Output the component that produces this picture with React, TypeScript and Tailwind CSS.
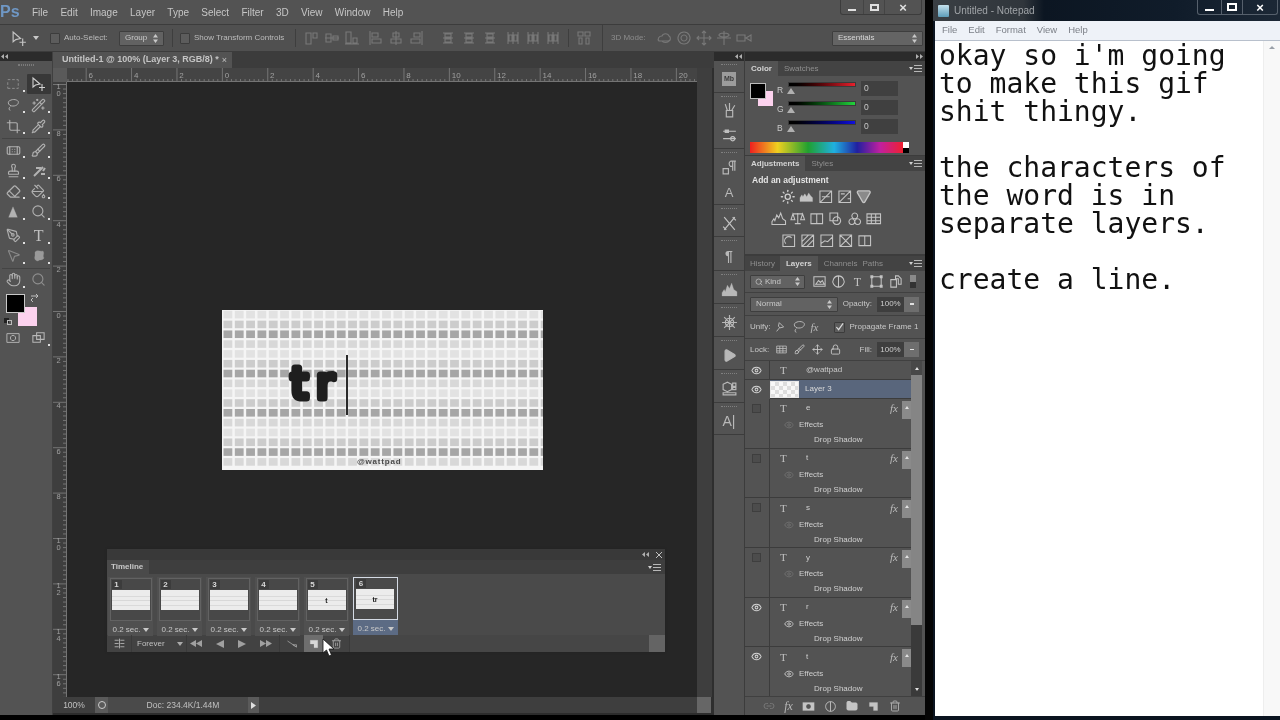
import { Wand2, Crop, Pipette, Bandage, Brush, Stamp, Eraser, PaintBucket, Search, PenTool, MousePointer2, Hand, Eye, Trash2, Link2, Folder, Lock, Move, Sun, Play, Triangle } from 'lucide-react';

const menus = ['File', 'Edit', 'Image', 'Layer', 'Type', 'Select', 'Filter', '3D', 'View', 'Window', 'Help'];

// little 16x16 drawings of the Photoshop glyphs lucide has no match for
const paths: Record<string, string> = {
  marquee: 'M2 3h3M7 3h3M12 3h2v2M14 7v3M14 12v1h-2M10 13H7M5 13H2v-2M2 9V6',
  move: 'M2 2v9l2.500-2L9 8zM11 8v7M8 11.500h6',
  lasso: 'M3 4c3-3 9-3 11 0 1 3-3 6-8 5-3-1-4-3-3-5M5 10c-2 1-2 4 0 4',
  history: 'M3 13l9-9M5 5h5M10 11h4M12 8l2-3',
  gradient: 'M8 2l5 12H3z',
  shape: 'M4 4c3-3 5 0 8-1 2 3-1 4 1 7-2 3-4 1-6 3-3 0-4-3-3-5z',
  alignTop: 'M2 3h5v11H2zM9 3h4v5H9z',
  alignMid: 'M2 4h5v8H2zM9 6h5v4H9zM1 8h14',
  alignBot: 'M2 2h5v11H2zM9 8h4v5H9zM1 14h14',
  alignLeft: 'M2 1v14M4 3h6v4H4zM4 9h9v4H4z',
  alignCenter: 'M8 1v14M5 3h6v4H5zM3 9h10v4H3z',
  alignRight: 'M14 1v14M6 3h6v4H6zM3 9h9v4H3z',
  distH: 'M3 3h10M3 8h10M3 13h10M5 4h6v3H5zM5 9h6v3H5z',
  distV: 'M3 2v12M8 2v12M13 2v12M4 5h3v6H4zM9 5h3v6H9z',
  gap: 'M2 2h5v4H2zM9 2h5v4H9zM3 8h3v6H3zM10 8h3v6h-3z',
  orbit: 'M3 11c-2-2 0-5 3-5 1-3 6-3 7 0 2 1 2 5-1 5zM6 11c1 2 6 2 7 0',
  roll: 'M8 2a6 6 0 1 0 .01 0zM8 5a3 3 0 1 0 .01 0z',
  pan: 'M8 1v14M1 8h14M6 3l2-2 2 2M6 13l2 2 2-2M3 6L1 8l2 2M13 6l2 2-2 2',
  slide: 'M8 3a5 2 0 1 0 .01 0zM8 1v14M1 8h14',
  cam: 'M1 5h8v6H1zM10 8l5-3v6z',
  screen: 'M6 3h8v7H6zM2 6h8v7H2z',
  tools: 'M3 2l10 12M13 2L3 14M2 11l3 3M11 2l3 3',
  brushes: 'M5 8h6v6H5zM6 8L4 2M8 8V1M10 8l3-5',
  sliders: 'M2 4h12M2 11h12M11 9a2 2 0 1 0 .01 0zM4 3h3v2H4z',
  paraStyle: 'M9 2h5M11 2v9M13 2v9M9 2a3 3 0 0 0 0 5h2M2 9h5v5H2z',
  hist: 'M1 14V11l2-3 1 2 2-6 2 3 2-5 2 6 3 2v4z',
  wheel: 'M8 1v14M1 8h14M3 3l10 10M13 3L3 13M8 4a4 4 0 1 0 .01 0z',
  cube: 'M2 4l4-2 4 2v5l-4 2-4-2zM11 3h3v3h-3zM11 7h3v2h-3zM2 12h12v2H2z',
  timelineMenu: 'M2 4h5M2 8h5M2 12h5M9 4h5M9 8h5M9 12h5M8 2v12',
  tween: 'M2 4l12 8M9 9l5 3v-3z',
  newLayer: 'M3 3h10v10H8V8H3z',
  mask: 'M1 3h14v10H1zM8 5a3 3 0 1 0 .01 0z',
  adjustCircle: 'M8 2a6 6 0 1 0 .01 0zM8 2v12',
  pinCo: 'M3 13l4-5M6 3l5 5-4 1-2-2z',
  image: 'M2 3h12v10H2zM4 11l3-4 2 2 2-2 2 4z',
  crop2: 'M3 3h10v10H3zM2 2h2v2H2zM12 2h2v2h-2zM2 12h2v2H2zM12 12h2v2h-2z',
  smart: 'M3 6h6v8H3zM8 2h3l3 3v6h-3V5H8z',
  curves: 'M2 2h12v12H2zM2 14L14 2M4 8h8',
  levels: 'M1 13V9l2-3 1 2 2-3 2 3 2-4 2 3 2 2v4z',
  expo: 'M2 2h12v12H2zM2 14L14 2M4 5h4M11 10h3',
  scale: 'M8 2v11M3 3h10M3 3L1 9h4zM13 3l-2 6h4zM5 13h6',
  bw: 'M2 3h12v10H2zM8 3v10',
  photo: 'M2 2h8v8H2zM9 6a4 4 0 1 0 .01 0z',
  mixer: 'M8 2a3 3 0 1 0 .01 0zM5 8a3 3 0 1 0 .01 0zM11 8a3 3 0 1 0 .01 0z',
  grid: 'M1 3h14v10H1zM1 6.500h14M1 10h14M5.500 3v10M10 3v10',
  invert: 'M2 2h12v12H2zM5 11a4 4 0 0 1 6-6',
  poster: 'M2 2h12v12H2zM2 14L14 2M2 9l7-7M7 14l7-7',
  thresh: 'M2 2h12v12H2zM2 11l4-3 3 1 5-5',
  select: 'M2 2h12v12H2zM2 2l6 6 6-6M2 14l6-6 6 6',
};

const P = ({ n, s = 16, c = '#b2b2b2', f = false, w = 1.1 }: { n: string; s?: number; c?: string; f?: boolean; w?: number }) => (
  <svg width={s} height={s} viewBox="0 0 16 16" className="shrink-0">
    <path d={paths[n]} fill={f ? c : 'none'} stroke={c} strokeWidth={f ? 0.3 : w} />
  </svg>
);

const Arrows = () => (
  <svg width="5" height="9" viewBox="0 0 5 9" className="shrink-0">
    <path d="M2.500 0L5 3.500H0zM2.500 9L0 5.500h5z" fill="#c8c8c8" />
  </svg>
);

const Down = ({ c = '#c8c8c8' }: { c?: string }) => (
  <svg width="6" height="4" viewBox="0 0 6 4" className="shrink-0">
    <path d="M0 0h6L3 4z" fill={c} />
  </svg>
);

const PanelMenu = () => (
  <svg width="13" height="7" viewBox="0 0 13 7" className="shrink-0">
    <path d="M0 2h4L2 5z" fill="#d0d0d0" />
    <path d="M5 .5h8M5 3.500h8M5 6.500h8" stroke="#b8b8b8" />
  </svg>
);

const Collapse = ({ flip = false }: { flip?: boolean }) => (
  <svg width="7" height="5" viewBox="0 0 7 5" className="shrink-0">
    <path d={flip ? 'M0 0l3 2.500L0 5zM4 0l3 2.500L4 5z' : 'M3 0L0 2.500 3 5zM7 0L4 2.500 7 5z'} fill="#b0b0b0" />
  </svg>
);

const Tool = ({ children, active = false, more = true }: { children: React.ReactNode; active?: boolean; more?: boolean }) => (
  <div className={`relative flex h-[20px] w-[25px] items-center justify-center rounded-[1px] ${active ? 'bg-[#383838]' : ''}`}>
    {children}
    {more && <span className="absolute bottom-[2px] right-[1px] h-[2px] w-[2px] bg-[#e0e0e0]" />}
  </div>
);

const ic = { size: 15, color: '#b0b0b0', strokeWidth: 1.8 };

const toolRows: React.ReactNode[][] = [
  [<P n="marquee" s={14} c="#8e8e8e" />, <P n="move" c="#d0d0d0" />],
  [<P n="lasso" s={14} />, <Wand2 {...ic} />],
  [<Crop {...ic} />, <Pipette {...ic} />],
];
const toolRows2: React.ReactNode[][] = [
  [<Bandage {...ic} />, <Brush {...ic} />],
  [<Stamp {...ic} />, <P n="history" w={2} />],
  [<Eraser {...ic} />, <PaintBucket {...ic} />],
  [<P n="gradient" f s={14} />, <Search {...ic} />],
];
const toolRows3: React.ReactNode[][] = [
  [<PenTool {...ic} />, <span className="font-['Liberation_Serif',serif] text-[16px] leading-none text-[#c0c0c0]">T</span>],
  [<MousePointer2 {...ic} color="#8a8a8a" />, <P n="shape" f c="#9a9a9a" />],
];

const LeftTools = () => (
  <div className="flex w-[53px] shrink-0 flex-col border-r border-[#404040] bg-[#535353]">
    <div className="flex h-[9px] items-center bg-[#2b2b2b] pl-[1px]">
      <Collapse />
    </div>
    <div className="mx-auto mt-[3px] h-[2px] w-[16px] border-y border-dotted border-[#7a7a7a]" />
    <div className="mt-[8px] flex flex-col gap-[1px] px-[1px]">
      {toolRows.map((r, i) => (
        <div key={i} className="flex gap-[1px]">
          <Tool>{r[0]}</Tool>
          <Tool active={i === 0} more={i !== 0}>{r[1]}</Tool>
        </div>
      ))}
    </div>
    <div className="mx-[2px] mb-[1px] mt-[2px] h-px bg-[#444444]" />
    <div className="flex flex-col gap-[0.67px] px-[1px]">
      {toolRows2.map((r, i) => (
        <div key={i} className="flex gap-[1px]">
          <Tool>{r[0]}</Tool>
          <Tool>{r[1]}</Tool>
        </div>
      ))}
    </div>
    <div className="flex flex-col px-[1px] pt-[4px]">
      {toolRows3.map((r, i) => (
        <div key={i} className="flex gap-[1px]">
          <Tool>{r[0]}</Tool>
          <Tool>{r[1]}</Tool>
        </div>
      ))}
    </div>
    <div className="mx-[2px] mb-[1px] mt-[2px] h-px bg-[#444444]" />
    <div className="flex gap-[1px] px-[1px]">
      <Tool><Hand {...ic} /></Tool>
      <Tool more={false}><Search {...ic} color="#8f8f8f" /></Tool>
    </div>
    <div className="relative mt-[4px] h-[34px]">
      <div className="absolute left-[18px] top-[13px] h-[19px] w-[19px] bg-[#fcd2ee]" />
      <div className="absolute left-[6px] top-0 h-[19px] w-[19px] border border-[#c8c8c8] bg-black" />
      <svg width="10" height="8" viewBox="0 0 10 8" className="absolute left-[30px] top-0">
        <path d="M1 2h7M6 0l2 2-2 2M1 6l2-2M1 6l2 2" stroke="#c0c0c0" fill="none" />
      </svg>
      <div className="absolute left-[4px] top-[24px] h-[5px] w-[5px] bg-[#222222]" />
      <div className="absolute left-[7px] top-[26px] h-[5px] w-[5px] border border-[#bbbbbb]" />
    </div>
    <div className="flex gap-[1px] px-[1px]">
      <Tool more={false}><P n="mask" s={14} /></Tool>
      <Tool><P n="screen" s={15} c="#b8b8b8" /></Tool>
    </div>
  </div>
);

const Check = ({ on = false, size = 'w-[10px] h-[11px]' }: { on?: boolean; size?: string }) => (
  <div className={`flex shrink-0 items-center justify-center rounded-[1px] border border-[#3c3c3c] bg-[#5c5c5c] ${size}`}>
    {on && (
      <svg width="10" height="10" viewBox="0 0 10 10">
        <path d="M1.500 5l2.500 3L9 1" stroke="#dcdcdc" strokeWidth="1.300" fill="none" />
      </svg>
    )}
  </div>
);

const dim = '#787878';

const OptionsBar = () => (
  <div className="flex h-[28px] items-center border-y border-[#3c3c3c] bg-[#505050] text-[8px] text-[#bcbcbc]">
    <div className="ml-[11px]"><P n="move" c="#c4c4c4" s={17} /></div>
    <div className="ml-[5px]"><Down /></div>
    <div className="ml-[11px]"><Check /></div>
    <span className="ml-[4px] w-[43px] whitespace-nowrap">Auto-Select:</span>
    <div className="ml-[12px] flex h-[15px] w-[45px] items-center justify-between rounded-[1px] border border-[#3e3e3e] bg-[#626262] px-[5px] text-[#cacaca]">
      Group <Arrows />
    </div>
    <div className="ml-[8px] h-[18px] w-px bg-[#3e3e3e]" />
    <div className="ml-[7px]"><Check /></div>
    <span className="ml-[4px] w-[90px] whitespace-nowrap">Show Transform Controls</span>
    <div className="ml-[11px] h-[18px] w-px bg-[#3e3e3e]" />
    <div className="ml-[8px] flex gap-[4px]">
      <P n="alignTop" c={dim} /><P n="alignMid" c={dim} /><P n="alignBot" c={dim} />
    </div>
    <div className="ml-[8px] flex gap-[4px]">
      <P n="alignLeft" c={dim} /><P n="alignCenter" c={dim} /><P n="alignRight" c={dim} />
    </div>
    <div className="ml-[16px] flex gap-[5px]">
      <P n="distH" c={dim} /><P n="distH" c={dim} /><P n="distH" c={dim} />
    </div>
    <div className="ml-[7px] flex gap-[4px]">
      <P n="distV" c={dim} /><P n="distV" c={dim} /><P n="distV" c={dim} />
    </div>
    <div className="ml-[7px] h-[18px] w-px bg-[#3e3e3e]" />
    <div className="ml-[7px]"><P n="gap" c={dim} /></div>
    <div className="ml-[10px] h-[26px] w-px bg-[#3e3e3e]" />
    <span className="ml-[8px] w-[33px] whitespace-nowrap text-[#8c8c8c]">3D Mode:</span>
    <div className="ml-[12px] flex gap-[4px]">
      <P n="orbit" c={dim} /><P n="roll" c={dim} /><P n="pan" c={dim} /><P n="slide" c={dim} /><P n="cam" c={dim} />
    </div>
    <div className="ml-auto mr-[2px] flex h-[15px] w-[91px] items-center justify-between rounded-[1px] border border-[#3e3e3e] bg-[#646464] px-[5px] text-[#d8d8d8]">
      Essentials <Arrows />
    </div>
  </div>
);

// major ticks on both rulers fall every 45.4px
const topLabels = ['6', '4', '2', '0', '2', '4', '6', '8', '10', '12', '14', '16', '18', '20'];
const sideLabels = ['1|0', '8', '6', '4', '2', '0', '2', '4', '6', '8', '1|0', '1|2', '1|4', '1|6'];

const TopRuler = () => (
  <svg width="630" height="14" className="block shrink-0">
    {Array.from({ length: 139 }).map((_, i) => {
      const x = 1 + i * 4.54;
      const major = i % 10 === 4;
      return <line key={i} x1={x} x2={x} y1={major ? 0 : 11} y2={14} stroke="#747474" />;
    })}
    <line x1="0" x2="630" y1="13.500" y2="13.500" stroke="#747474" />
    {topLabels.map((l, i) => (
      <text key={i} x={21.5 + i * 45.4} y="10" fontSize="8" fill="#a0a0a0" fontFamily="Liberation Sans, sans-serif">{l}</text>
    ))}
  </svg>
);

const SideRuler = () => (
  <svg width="14" height="616" className="block shrink-0">
    {Array.from({ length: 136 }).map((_, i) => {
      const y = 2.5 + i * 4.54;
      const major = i % 10 === 0;
      return <line key={i} x1={major ? 0 : 10} x2={14} y1={y} y2={y} stroke="#747474" />;
    })}
    <line x1="13.500" x2="13.500" y1="0" y2="616" stroke="#747474" />
    {sideLabels.map((l, i) => {
      const parts = l.split('|');
      return parts.map((p, j) => (
        <text key={`${i}${j}`} x="3.500" y={(parts.length > 1 ? 7 : 8.5) + i * 45.4 + j * 7} fontSize="7.500" fill="#a0a0a0" fontFamily="Liberation Sans, sans-serif">{p}</text>
      ));
    })}
  </svg>
);

const shades = ['#e2e2e2', '#cccccc', '#a6a6a6', '#d8d8d8'];

const DocPicture = () => (
  <svg width="321" height="160" className="block">
    <rect width="321" height="160" fill="#f5f5f5" />
    {Array.from({ length: 16 }).map((_, r) =>
      Array.from({ length: 29 }).map((_, c) => (
        <rect key={`${r}-${c}`} x={1.5 + c * 11.33} y={0.8 + r * 9.82} width={8.8} height={7.6} fill={shades[r % 4]} />
      )),
    )}
    <text x="69" y="88" fontFamily="DejaVu Sans, sans-serif" fontSize="42" letterSpacing="9" fill="#1e1e1e" stroke="#1e1e1e" strokeWidth="7" strokeLinejoin="round" strokeLinecap="round">tr</text>
    <rect x="124" y="45" width="2" height="60" fill="#2a2a2a" />
    <text x="135" y="154" fontFamily="Liberation Sans, sans-serif" fontWeight="700" fontSize="8" letterSpacing="0.8" fill="#4a4a4a">@wattpad</text>
  </svg>
);

const TimelineFrame = ({ n, selected = false, mark = '' }: { n: number; selected?: boolean; mark?: string }) => (
  <div className={`flex w-[45px] shrink-0 flex-col ${selected ? 'bg-[#5c6b84]' : 'bg-[#505050]'}`}>
    <div className={`h-[43px] ${selected ? 'w-[45px] border border-[#d4dae4] bg-[#4a4a4a] pl-[1px]' : 'mx-auto mt-[1px] h-[42px] w-[42px] border border-[#626262] bg-[#484848]'}`}>
      <div className="ml-[1px] mt-[1px] flex h-[9px] w-[10px] items-center justify-center bg-[#3c3c3c] text-[8px] font-bold leading-none text-[#d8d8d8]">{n}</div>
      <div className="relative ml-[1px] mt-[1px] flex h-[20px] w-[38px] items-center justify-center bg-[#ececec]">
        <div className="absolute inset-x-0 top-[6px] h-px bg-[#dadada]" />
        <div className="absolute inset-x-0 top-[10px] h-px bg-[#d8d8d8]" />
        <div className="absolute inset-x-0 top-[15px] h-px bg-[#dadada]" />
        {mark && <span className="relative text-[7px] font-bold leading-none text-[#1a1a1a]">{mark}</span>}
      </div>
    </div>
    <div className="mt-[3px] flex items-center justify-center gap-[2px] text-[8px] leading-[12px] text-[#c8c8c8]">
      0.2 sec. <Down />
    </div>
  </div>
);

const Timeline = () => (
  <div className="absolute left-[40px] top-[467px] w-[558px] bg-[#4a4a4a] shadow-[0_0_2px_#222]">
    <div className="flex h-[11px] items-center justify-end gap-[7px] bg-[#393939] pr-[3px]">
      <Collapse /><svg width="6" height="6" viewBox="0 0 6 6"><path d="M0 0l6 6M6 0L0 6" stroke="#c0c0c0" /></svg>
    </div>
    <div className="flex h-[14px] items-center justify-between bg-[#3e3e3e] pr-[4px]">
      <div className="flex h-full w-[42px] items-center bg-[#4a4a4a] pl-[4px] text-[8px] font-bold text-[#c8c8c8]">Timeline</div>
      <PanelMenu />
    </div>
    <div className="flex h-[61px] items-start gap-[4px] pl-[1px] pt-[3px]">
      <TimelineFrame n={1} />
      <TimelineFrame n={2} />
      <TimelineFrame n={3} />
      <TimelineFrame n={4} />
      <TimelineFrame n={5} mark="t" />
      <TimelineFrame n={6} mark="tr" selected />
    </div>
    <div className="flex h-[17px] items-center bg-[#424242] text-[8px] text-[#c0c0c0]">
      <div className="flex h-full w-[25px] items-center justify-center border-r border-[#3a3a3a]"><P n="timelineMenu" s={13} /></div>
      <div className="flex h-full w-[55px] items-center justify-between border-r border-[#3a3a3a] pl-[5px] pr-[3px]">Forever <Down c="#aaaaaa" /></div>
      <div className="flex h-full w-[93px] items-center justify-between border-r border-[#3a3a3a] pl-[3px] pr-[7px]">
        <svg width="12" height="7" viewBox="0 0 12 7"><path d="M6 0L0 3.500 6 7zM12 0L6 3.500 12 7z" fill="#a0a0a0" /></svg>
        <svg width="8" height="8" viewBox="0 0 8 8"><path d="M8 0L0 4l8 4z" fill="#a0a0a0" /></svg>
        <svg width="8" height="8" viewBox="0 0 8 8"><path d="M0 0l8 4-8 4z" fill="#a0a0a0" /></svg>
        <svg width="12" height="7" viewBox="0 0 12 7"><path d="M0 0l6 3.500L0 7zM6 0l6 3.500L6 7z" fill="#a0a0a0" /></svg>
      </div>
      <div className="flex h-full w-[24px] items-center justify-center"><P n="tween" s={12} c="#a0a0a0" /></div>
      <div className="flex h-full w-[19px] items-center justify-center bg-[#6e6e6e]"><P n="newLayer" s={12} c="#d8d8d8" f /></div>
      <div className="flex h-full w-[26px] items-center justify-center"><Trash2 size={11} color="#a0a0a0" /></div>
      <div className="h-full flex-1 border-l border-[#3a3a3a] bg-[#464646]" />
      <div className="h-full w-[16px] bg-[#646464]" />
    </div>
    <svg width="13" height="19" viewBox="0 0 13 19" className="absolute left-[215px] top-[89px]">
      <path d="M1 1v14l3.500-3 2.500 6 2.500-1-2.500-6h5z" fill="#ffffff" stroke="#111111" strokeWidth="0.800" />
    </svg>
  </div>
);

const DocArea = () => (
  <div className="flex min-w-0 flex-1 flex-col">
    <div className="flex h-[16px] shrink-0 bg-[#3c3c3c]">
      <div className="flex w-[179px] items-center justify-between bg-[#535353] pl-[9px] pr-[5px] text-[9px] font-bold text-[#c4c4c4]">
        <span className="whitespace-nowrap">Untitled-1 @ 100% (Layer 3, RGB/8) *</span>
        <span className="text-[9px] font-normal leading-none text-[#c0c0c0]">×</span>
      </div>
    </div>
    <div className="flex min-h-0 flex-1">
      <div className="flex min-w-0 flex-1 flex-col">
        <div className="flex h-[14px] shrink-0 bg-[#444444]">
          <div className="h-[14px] w-[14px] shrink-0 bg-[#5a5a5a]" />
          <TopRuler />
        </div>
        <div className="flex min-h-0 flex-1">
          <div className="shrink-0 overflow-hidden bg-[#3e3e3e]"><SideRuler /></div>
          <div className="relative min-w-0 flex-1 bg-[#262626]">
            <div className="absolute left-[155px] top-[228px] h-[160px] w-[321px]">
              <DocPicture />
            </div>
            <Timeline />
          </div>
        </div>
      </div>
      <div className="w-[17px] shrink-0 border-r-2 border-[#2e2e2e] bg-[#3e3e3e]" />
    </div>
    <div className="flex h-[18px] shrink-0 items-start bg-[#2c2c2c] text-[8.5px] text-[#c0c0c0]">
      <div className="flex h-[16px] w-[42px] items-center justify-center bg-[#3e3e3e]">100%</div>
      <div className="flex h-[16px] w-[13px] items-center justify-center bg-[#5a5a5a]">
        <div className="h-[8px] w-[8px] rounded-full border border-[#cccccc]" />
      </div>
      <div className="flex h-[16px] w-[140px] items-center justify-center bg-[#4a4a4a] pl-[10px]">Doc: 234.4K/1.44M</div>
      <div className="flex h-[16px] w-[11px] items-center justify-center bg-[#5a5a5a]">
        <svg width="5" height="7" viewBox="0 0 5 7"><path d="M0 0l5 3.500L0 7z" fill="#e0e0e0" /></svg>
      </div>
      <div className="h-[16px] flex-1 bg-[#3e3e3e]" />
      <div className="h-[16px] w-[14px] bg-[#666666]" />
      <div className="h-[16px] w-[3px] bg-[#2e2e2e]" />
    </div>
  </div>
);

const dockGroups = [
  [<div className="flex h-[14px] w-[14px] items-center justify-center bg-[#9c9c9c] text-[7px] font-bold text-[#3c3c3c]">Mb</div>],
  [<P n="brushes" c="#b8b8b8" s={17} />, <P n="sliders" c="#c0c0c0" s={17} />],
  [<P n="paraStyle" c="#b8b8b8" s={17} />, <span className="text-[13px] leading-none text-[#b8b8b8]">A</span>],
  [<P n="tools" c="#c4c4c4" s={17} />],
  [<span className="text-[14px] font-bold leading-none text-[#b8b8b8]">¶</span>],
  [<P n="hist" c="#b8b8b8" f s={17} />],
  [<P n="wheel" c="#b8b8b8" s={17} />],
  [<Play size={15} color="#b8b8b8" fill="#b8b8b8" />],
  [<P n="cube" c="#b8b8b8" s={17} />],
  [<span className="text-[14px] leading-none text-[#b8b8b8]">A|</span>],
];
const dockHeights = ['h-[32px]', 'h-[56px]', 'h-[56px]', 'h-[32px]', 'h-[34px]', 'h-[33px]', 'h-[33px]', 'h-[33px]', 'h-[33px]', 'h-[32px]'];

const Dock = () => (
  <div className="flex w-[30px] shrink-0 flex-col bg-[#4a4a4a]">
    <div className="flex h-[9px] shrink-0 items-center justify-end bg-[#2b2b2b] pr-[2px]"><Collapse /></div>
    {dockGroups.map((g, i) => (
      <div key={i} className={`flex shrink-0 flex-col items-center border-b border-[#3c3c3c] bg-[#535353] ${dockHeights[i]}`}>
        <div className="mt-[3px] h-[2px] w-[16px] border-t border-dotted border-[#808080]" />
        <div className="flex flex-1 flex-col items-center justify-around">{g}</div>
      </div>
    ))}
    <div className="flex-1 bg-[#535353]" />
  </div>
);

const Tabs = ({ items, active }: { items: string[]; active: number }) => (
  <div className="flex h-[15px] shrink-0 items-center bg-[#434343] pr-[3px] text-[8px]">
    {items.map((t, i) => (
      <div key={t} className={`flex h-full items-center px-[6px] ${i === active ? 'bg-[#535353] font-bold text-[#d4d4d4]' : 'text-[#8e8e8e]'}`}>{t}</div>
    ))}
    <div className="ml-auto"><PanelMenu /></div>
  </div>
);

const Slider = ({ label, bar }: { label: string; bar: string }) => (
  <div className="flex h-[19px] items-start">
    <span className="ml-[3px] mt-[3px] w-[11px] text-[8.5px] leading-[12px] text-[#c8c8c8]">{label}</span>
    <div className="relative h-[15px] w-[73px] pt-[1px]">
      <div className={`h-[5px] w-[68px] border border-[#3a3a3a] ${bar}`} />
      <div className="absolute bottom-[2px] left-[-1px] h-0 w-0 border-x-[4px] border-b-[6px] border-x-transparent border-b-[#b0b0b0]" />
    </div>
    <div className="flex h-[15px] w-[37px] items-center bg-[#404040] pl-[3px] text-[8.5px] text-[#c8c8c8]">0</div>
  </div>
);

const ColorPanel = () => (
  <div className="flex h-[94px] shrink-0 flex-col bg-[#535353]">
    <Tabs items={['Color', 'Swatches']} active={0} />
    <div className="flex pl-[5px] pt-[7px]">
      <div className="relative h-[23px] w-[24px] shrink-0">
        <div className="absolute left-[8px] top-[8px] h-[15px] w-[15px] bg-[#fcd2ee]" />
        <div className="absolute left-0 top-0 h-[16px] w-[16px] border border-[#bdbdbd] bg-black" />
      </div>
      <div className="-mt-[2px] flex flex-col">
        <Slider label="R" bar="bg-gradient-to-r from-black to-[#e8202c]" />
        <Slider label="G" bar="bg-gradient-to-r from-black to-[#22d43c]" />
        <Slider label="B" bar="bg-gradient-to-r from-black to-[#1010e0]" />
      </div>
    </div>
    <div className="ml-[5px] mt-[4px] flex h-[11px] w-[159px]">
      <div className="flex-1 bg-[linear-gradient(to_right,#f02020,#f0d020_18%,#20a030_38%,#20b0e0_55%,#2020a0_70%,#c020a0_85%,#f02030)]" />
      <div className="flex w-[6px] flex-col">
        <div className="flex-1 bg-white" />
        <div className="flex-1 bg-black" />
      </div>
    </div>
  </div>
);

const AdjRow = ({ items, indent }: { items: string[]; indent: string }) => (
  <div className={`flex gap-[3.500px] ${indent}`}>
    {items.map((n, i) => <P key={i} n={n} s={15.5} c="#c4c4c4" />)}
  </div>
);

const AdjustPanel = () => (
  <div className="mt-px flex h-[98px] shrink-0 flex-col bg-[#535353]">
    <Tabs items={['Adjustments', 'Styles']} active={0} />
    <div className="pl-[7px] pt-[3px] text-[8.5px] font-bold leading-[12px] text-[#e4e4e4]">Add an adjustment</div>
    <div className="mt-[3px] flex flex-col gap-[6.500px]">
      <div className="flex gap-[3.500px] pl-[35px]">
        <Sun size={15.5} color="#d0d0d0" />
        <P n="levels" s={15.5} c="#c4c4c4" f />
        <P n="curves" s={15.5} c="#c4c4c4" />
        <P n="expo" s={15.5} c="#c4c4c4" />
        <Triangle size={15.5} color="#c4c4c4" fill="#8a8a8a" className="rotate-180" />
      </div>
      <AdjRow items={['hist', 'scale', 'bw', 'photo', 'mixer', 'grid']} indent="pl-[26px]" />
      <AdjRow items={['invert', 'poster', 'thresh', 'select', 'bw']} indent="pl-[36px]" />
    </div>
  </div>
);

const EyeCell = ({ on = true }: { on?: boolean }) => (
  <div className="flex h-[19px] w-[23px] shrink-0 items-center justify-center">
    {on ? <Eye size={11} color="#d0d0d0" strokeWidth={2.2} /> : <div className="h-[9px] w-[9px] border border-[#3e3e3e] bg-[#4c4c4c]" />}
  </div>
);

const TextLayer = ({ name, visible }: { name: string; visible: boolean }) => (
  <div className="relative flex h-[49.7px] shrink-0 border-b border-[#3c3c3c] text-[8px] text-[#d0d0d0]">
    <div className="w-[25px] shrink-0 border-r border-[#3c3c3c]"><EyeCell on={visible} /></div>
    <div className="flex flex-1 flex-col">
      <div className="flex h-[19px] items-center">
        <span className="ml-[10px] w-[26px] font-['Liberation_Serif',serif] text-[11px] text-[#c0c0c0]">T</span>
        <span>{name}</span>
        <span className="ml-auto mr-[13px] font-['Liberation_Serif',serif] text-[11px] italic text-[#bbbbbb]">fx</span>
      </div>
      <div className="flex h-[15px] items-center pl-[14px]">
        <Eye size={10} color={visible ? '#c0c0c0' : '#6e6e6e'} strokeWidth={2.2} />
        <span className="ml-[5px]">Effects</span>
      </div>
      <div className="flex h-[15px] items-center pl-[44px]">Drop Shadow</div>
    </div>
    <div className="absolute right-0 top-[2px] flex h-[18px] w-[9px] items-start justify-center bg-[#8a8a8a] pt-[5px]">
      <div className="h-0 w-0 border-x-[2px] border-b-[3px] border-x-transparent border-b-[#e0e0e0]" />
    </div>
  </div>
);

const Divider = () => <div className="h-px shrink-0 bg-[#404040]" />;

const Num100 = ({ label }: { label: string }) => (
  <div className="ml-auto flex items-center pr-[6px]">
    <span className="mr-[5px]">{label}</span>
    <div className="flex h-[15px] w-[27px] items-center justify-center bg-[#3e3e3e] text-[#cccccc]">100%</div>
    <div className="flex h-[15px] w-[15px] items-center justify-center bg-[#6e6e6e]"><div className="h-[1.500px] w-[4px] bg-[#e0e0e0]" /></div>
  </div>
);

const LayersPanel = () => (
  <div className="mt-[2px] flex min-h-0 flex-1 flex-col bg-[#535353] text-[8px] text-[#c8c8c8]">
    <div className="flex h-[15px] shrink-0 items-center bg-[#434343] pr-[3px]">
      <span className="px-[5px] text-[#8e8e8e]">History</span>
      <span className="flex h-full items-center bg-[#535353] px-[6px] font-bold text-[#d4d4d4]">Layers</span>
      <span className="ml-[6px] text-[#8e8e8e]">Channels</span>
      <span className="ml-[5px] text-[#8e8e8e]">Paths</span>
      <div className="ml-auto"><PanelMenu /></div>
    </div>
    <div className="flex h-[21px] shrink-0 items-center pl-[5px]">
      <div className="flex h-[14px] w-[55px] items-center justify-between rounded-[1px] border border-[#3e3e3e] bg-[#626262] px-[4px]">
        <span className="flex items-center gap-[2px]"><Search size={8} color="#cccccc" />Kind</span> <Arrows />
      </div>
      <div className="ml-[7px] flex items-center gap-[4px]">
        <P n="image" s={15} c="#c4c4c4" /><P n="adjustCircle" s={15} c="#c4c4c4" />
        <span className="w-[15px] text-center font-['Liberation_Serif',serif] text-[12px] text-[#c4c4c4]">T</span>
        <P n="crop2" s={15} c="#c4c4c4" /><P n="smart" s={15} c="#c4c4c4" />
      </div>
      <div className="ml-[7px] flex h-[13px] w-[6px] flex-col"><div className="flex-1 bg-[#8a8a8a]" /><div className="flex-1 bg-[#333333]" /></div>
    </div>
    <Divider />
    <div className="flex h-[22px] shrink-0 items-center pl-[5px]">
      <div className="flex h-[15px] w-[88px] items-center justify-between rounded-[1px] border border-[#3e3e3e] bg-[#626262] px-[5px]">Normal <Arrows /></div>
      <Num100 label="Opacity:" />
    </div>
    <Divider />
    <div className="flex h-[22px] shrink-0 items-center pl-[5px]">
      Unify:
      <div className="ml-[4px] flex items-center gap-[4px]"><P n="pinCo" s={14} c="#b8b8b8" /><P n="lasso" s={14} c="#b8b8b8" /><span className="w-[14px] font-['Liberation_Serif',serif] text-[11px] italic text-[#b8b8b8]">fx</span></div>
      <div className="ml-[10px]"><Check on size="h-[11px] w-[11px]" /></div>
      <span className="ml-[4px] whitespace-nowrap">Propagate Frame 1</span>
    </div>
    <Divider />
    <div className="flex h-[21px] shrink-0 items-center pl-[5px]">
      Lock:
      <div className="ml-[7px] flex items-center gap-[7px]">
        <P n="grid" s={11} c="#c4c4c4" />
        <Brush size={11} color="#c4c4c4" />
        <Move size={11} color="#c4c4c4" />
        <Lock size={11} color="#c4c4c4" />
      </div>
      <Num100 label="Fill:" />
    </div>
    <div className="flex min-h-0 flex-1 border-t border-[#404040]">
      <div className="flex min-w-0 flex-1 flex-col overflow-hidden">
        <div className="flex h-[19px] shrink-0 items-center border-b border-[#3c3c3c]">
          <div className="w-[25px] shrink-0 border-r border-[#3c3c3c]"><EyeCell /></div>
          <span className="ml-[10px] w-[26px] font-['Liberation_Serif',serif] text-[11px] text-[#c0c0c0]">T</span>
          <span>@wattpad</span>
        </div>
        <div className="flex h-[19px] shrink-0 items-center border-b border-[#3c3c3c] bg-[#59667c]">
          <div className="w-[25px] shrink-0 bg-[#535353]"><EyeCell /></div>
          <div className="h-[17px] w-[29px] shrink-0 border border-[#e8e8e8] bg-[repeating-conic-gradient(#dddddd_0_25%,#f8f8f8_0_50%)] bg-[length:8px_8px]" />
          <span className="ml-[6px] text-[#d8d8d8]">Layer 3</span>
        </div>
        <TextLayer name="e" visible={false} />
        <TextLayer name="t" visible={false} />
        <TextLayer name="s" visible={false} />
        <TextLayer name="y" visible={false} />
        <TextLayer name="r" visible />
        <TextLayer name="t" visible />
      </div>
      <div className="flex w-[11px] shrink-0 flex-col bg-[#3a3a3a]">
        <div className="flex h-[14px] items-center justify-center bg-[#484848]">
          <div className="h-0 w-0 border-x-[2.500px] border-b-[3px] border-x-transparent border-b-[#e0e0e0]" />
        </div>
        <div className="h-[250px] bg-[#858585]" />
        <div className="flex-1" />
        <div className="flex h-[14px] items-center justify-center">
          <div className="h-0 w-0 border-x-[2.500px] border-t-[3px] border-x-transparent border-t-[#e0e0e0]" />
        </div>
      </div>
      <div className="w-[3px] shrink-0" />
    </div>
    <div className="flex h-[19px] shrink-0 items-center justify-center gap-[9px] border-t border-[#404040] pl-[8px] pr-[14px]">
      <Link2 size={12} color="#777777" />
      <span className="font-['Liberation_Serif',serif] text-[12px] italic text-[#b8b8b8]">fx</span>
      <P n="mask" s={13} c="#c4c4c4" f />
      <P n="adjustCircle" s={13} c="#c4c4c4" />
      <Folder size={12} color="#c4c4c4" fill="#c4c4c4" />
      <P n="newLayer" s={13} c="#c4c4c4" f />
      <Trash2 size={12} color="#a8a8a8" />
    </div>
  </div>
);

const Notepad = () => (
  <div className="flex h-full w-[347px] shrink-0 flex-col bg-[#0b1420]">
    <div className="flex h-[21px] shrink-0 items-start bg-[linear-gradient(to_right,#3a3f44,#30363c_26%,#0c1622_32%,#101c2a_70%,#1c2836)]">
      <div className="ml-[5px] mt-[5px] h-[12px] w-[11px] shrink-0 rounded-[1px] bg-[linear-gradient(to_bottom,#c4e0ec,#5c9cb8)]" />
      <span className="ml-[5px] mt-[4px] text-[10px] leading-[13px] text-[#a0a4a8]">Untitled - Notepad</span>
      <div className="ml-auto mr-[2px] flex h-[15px] w-[81px] overflow-hidden rounded-b-[3px] border border-t-0 border-[#56606c]">
        <div className="flex w-[24px] items-end justify-center border-r border-[#56606c] pb-[3px]"><div className="h-[2px] w-[9px] bg-white" /></div>
        <div className="flex w-[21px] items-center justify-center border-r border-[#56606c]"><div className="h-[8px] w-[10px] border-2 border-white" /></div>
        <div className="flex flex-1 items-center justify-center text-[13px] font-bold leading-none text-white">×</div>
      </div>
    </div>
    <div className="ml-[2px] flex min-h-0 flex-1 flex-col">
      <div className="flex h-[19px] shrink-0 items-center gap-[11px] bg-[#eef2f8] pl-[7px] text-[9.5px] text-[#7c8088]">
        <span>File</span><span>Edit</span><span>Format</span><span>View</span><span>Help</span>
      </div>
      <div className="flex min-h-0 flex-1 border-t border-[#b8c0cc] bg-white">
        <div className="min-w-0 flex-1 whitespace-pre pl-[4px] pt-px font-['DejaVu_Sans_Mono',monospace] text-[28px] leading-[28px] text-[#111111]">
          {"okay so i'm going\nto make this gif\nshit thingy.\n\nthe characters of\nthe word is in\nseparate layers.\n\ncreate a line."}
        </div>
        <div className="flex w-[17px] shrink-0 justify-center border-l border-[#eeeeee] bg-[#f8f8f8] pt-[5px]">
          <div className="h-0 w-0 border-x-[3px] border-b-[3px] border-x-transparent border-b-[#9aa0a8]" />
        </div>
      </div>
      <div className="h-[4px] shrink-0" />
    </div>
  </div>
);

export default function App() {
  return (
    <div className="flex h-[720px] w-[1280px] overflow-hidden bg-black font-['Liberation_Sans',sans-serif] blur-[0.35px]">
      <div className="flex h-[715px] w-[925px] shrink-0 flex-col bg-[#535353]">
        <div className="flex h-[24px] shrink-0 items-start">
          <span className="mt-[2px] w-[28px] text-[16px] font-bold leading-[20px] text-[#6f97c4]">Ps</span>
          <nav className="ml-[4px] mt-[6px] flex gap-[12.300px] text-[10px] leading-[13px] text-[#c6c6c6]">
            {menus.map((m) => <span key={m}>{m}</span>)}
          </nav>
          <div className="ml-auto mr-[3px] flex h-[15px] w-[82px] rounded-b-[3px] border border-t-0 border-[#3c3c3c] text-[#e0e0e0]">
            <div className="flex w-[23px] items-end justify-center border-r border-[#444444] pb-[3px]"><div className="h-[2px] w-[8px] bg-[#e0e0e0]" /></div>
            <div className="flex w-[21px] items-center justify-center border-r border-[#444444]"><div className="h-[7px] w-[9px] border-2 border-[#e0e0e0]" /></div>
            <div className="flex flex-1 items-center justify-center text-[13px] font-bold leading-none">×</div>
          </div>
        </div>
        <OptionsBar />
        <div className="flex min-h-0 flex-1">
          <LeftTools />
          <DocArea />
          <Dock />
          <div className="flex w-[181px] shrink-0 flex-col border-l border-[#3c3c3c] bg-[#3c3c3c]">
            <div className="flex h-[9px] shrink-0 items-center justify-end bg-[#2b2b2b] pr-[2px]"><Collapse flip /></div>
            <ColorPanel />
            <AdjustPanel />
            <LayersPanel />
          </div>
        </div>
      </div>
      <div className="w-[8px] shrink-0 bg-[#050505]" />
      <Notepad />
    </div>
  );
}
